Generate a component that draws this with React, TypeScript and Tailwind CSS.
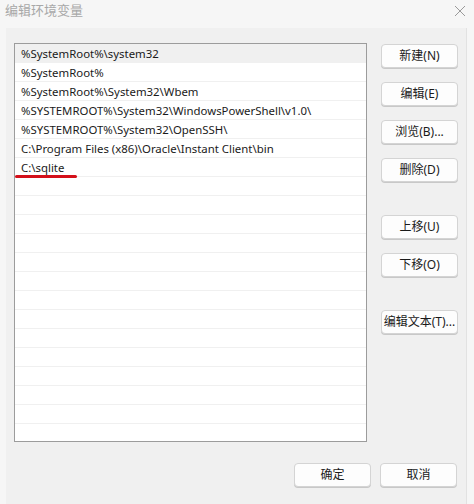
const paths = [
  "%SystemRoot%\\system32",
  "%SystemRoot%",
  "%SystemRoot%\\System32\\Wbem",
  "%SYSTEMROOT%\\System32\\WindowsPowerShell\\v1.0\\",
  "%SYSTEMROOT%\\System32\\OpenSSH\\",
  "C:\\Program Files (x86)\\Oracle\\Instant Client\\bin",
  "C:\\sqlite",
];

const rows = [...paths, ...Array(14).fill("")];

function Btn({ label, className = "" }: { label: string; className?: string }) {
  return (
    <button
      className={`h-[24px] w-[77px] rounded-[4px] border border-[#d4d4d4] bg-[#fdfdfd] text-[12px] text-[#1a1a1a] shadow-[0_1px_0_#c8c8c8] ${className}`}
    >
      {label}
    </button>
  );
}

export default function App() {
  return (
    <div
      className="flex h-[504px] w-[474px] flex-col overflow-hidden bg-[#f6f6f6]"
      style={{ fontFamily: '"Noto Sans", "Noto Sans CJK SC", sans-serif' }}
    >
      {/* title bar */}
      <div className="flex h-[28px] items-start justify-between pl-[5px] pr-[8px] pt-[1px]">
        <span className="text-[13px] leading-[18px] text-[#a8a8a8]">编辑环境变量</span>
        <svg width="12" height="12" viewBox="0 0 12 12" className="mt-[4px]">
          <path d="M1 1 L11 11 M11 1 L1 11" stroke="#9a9a9a" strokeWidth="1" />
        </svg>
      </div>

      <div className="ml-[6px] flex w-[461px] flex-1 flex-col border-r border-[#e2e2e2] bg-[#f0f0f0] px-[8px] pt-[15px]">
        <div className="flex gap-[14px]">
          {/* list */}
          <div className="h-[399px] w-[353px] overflow-hidden border border-[#9c9c9c] bg-white">
            {rows.map((r, i) => (
              <div
                key={i}
                className={`relative h-[19px] border-b border-[#f0f0f0] pl-[6px] pt-[1px] text-[11.4px] leading-[18px] text-[#1a1a1a] ${
                  i === 0 ? "bg-[#f0f0f0]" : ""
                }`}
              >
                {r}
                {r === "C:\\sqlite" && (
                  <div className="absolute left-0 top-[17px] h-[2.5px] w-[62px] rounded-full bg-[#d4101a]" />
                )}
              </div>
            ))}
          </div>

          {/* side buttons */}
          <div className="flex flex-col pt-[1px]">
            <Btn label="新建(N)" />
            <Btn label="编辑(E)" className="mt-[14px]" />
            <Btn label="浏览(B)..." className="mt-[14px]" />
            <Btn label="删除(D)" className="mt-[14px]" />
            <Btn label="上移(U)" className="mt-[33px]" />
            <Btn label="下移(O)" className="mt-[14px]" />
            <Btn label="编辑文本(T)..." className="mt-[33px]" />
          </div>
        </div>

        <div className="mt-[21px] flex justify-end gap-[9px] pr-[1px]">
          <Btn label="确定" />
          <Btn label="取消" />
        </div>
      </div>
    </div>
  );
}
